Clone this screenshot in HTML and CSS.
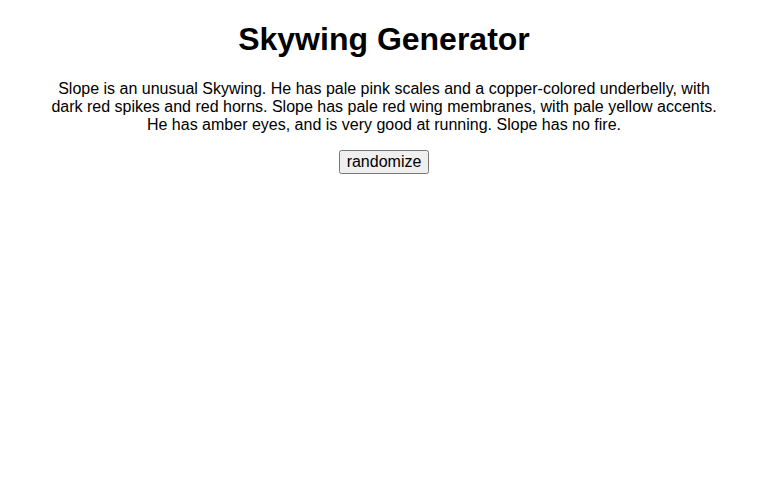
FILE: index.html
```html
<!DOCTYPE html>
<html lang="en">
<head>
    <meta charset="UTF-8">
    <meta name="viewport" content="width=device-width, initial-scale=1.0">
    <title>Skywing Generator</title>
    <link rel="stylesheet" href="styles.css">
</head>
<body>
    <h1>Skywing Generator</h1>
    <p class="description" id="description">Slope is an unusual Skywing. He has pale pink scales and a copper-colored underbelly, with dark red spikes and red horns. Slope has pale red wing membranes, with pale yellow accents. He has amber eyes, and is very good at running. Slope has no fire.</p>
    <p class="controls">
        <button id="randomize">randomize</button>
    </p>
</body>
</html>
```

FILE: styles.css
```css
body {
    margin: 0;
    font-family: "Liberation Sans", Arial, sans-serif;
    text-align: center;
    color: #000;
    background: #fff;
}
h1 {
    font-size: 32px;
}
.description {
    max-width: 680px;
    margin: 16px auto;
    font-size: 16px;
}
.controls button {
    font-family: "Liberation Sans", Arial, sans-serif;
    font-size: 16px;
}
```
